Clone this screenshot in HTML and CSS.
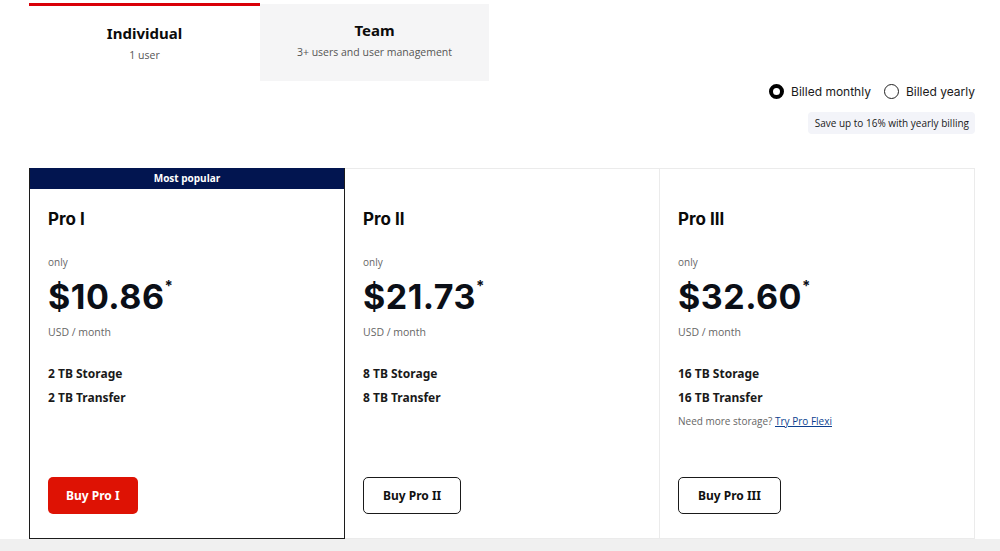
FILE: index.html
```html
<!DOCTYPE html>
<html lang="en">
<head>
<meta charset="utf-8">
<title>Plans</title>
<link rel="stylesheet" href="styles.css">
</head>
<body>
<main class="page">
  <div class="tabs">
    <div class="tab tab-active">
      <div class="tab-title">Individual</div>
      <div class="tab-sub">1 user</div>
    </div>
    <div class="tab tab-idle">
      <div class="tab-title">Team</div>
      <div class="tab-sub">3+ users and user management</div>
    </div>
  </div>

  <div class="billing">
    <div class="radios">
      <label class="radio"><span class="dot dot-on"></span>Billed monthly</label>
      <label class="radio"><span class="dot"></span>Billed yearly</label>
    </div>
    <div class="save">Save up to 16% with yearly billing</div>
  </div>

  <div class="cards">
    <section class="card card-featured">
      <div class="badge">Most popular</div>
      <div class="card-body">
        <h2 class="plan">Pro I</h2>
        <div class="only">only</div>
        <div class="price">$10.86<sup>*</sup></div>
        <div class="unit">USD / month</div>
        <div class="feat">2 TB Storage</div>
        <div class="feat">2 TB Transfer</div>
        <div class="grow"></div>
        <div><button class="btn btn-red">Buy Pro I</button></div>
      </div>
    </section>
    <section class="card">
      <div class="badge badge-empty"></div>
      <div class="card-body">
        <h2 class="plan">Pro II</h2>
        <div class="only">only</div>
        <div class="price">$21.73<sup>*</sup></div>
        <div class="unit">USD / month</div>
        <div class="feat">8 TB Storage</div>
        <div class="feat">8 TB Transfer</div>
        <div class="grow"></div>
        <div><button class="btn btn-outline">Buy Pro II</button></div>
      </div>
    </section>
    <section class="card">
      <div class="badge badge-empty"></div>
      <div class="card-body">
        <h2 class="plan">Pro III</h2>
        <div class="only">only</div>
        <div class="price">$32.60<sup>*</sup></div>
        <div class="unit">USD / month</div>
        <div class="feat">16 TB Storage</div>
        <div class="feat">16 TB Transfer</div>
        <div class="more">Need more storage? <a href="#" class="link">Try Pro Flexi</a></div>
        <div class="grow"></div>
        <div><button class="btn btn-outline">Buy Pro III</button></div>
      </div>
    </section>
  </div>
  <div class="footer-band"></div>
</main>
</body>
</html>
```

FILE: styles.css
```css
* { box-sizing: border-box; }
html, body { margin: 0; padding: 0; background: #fff; }
body {
  font-family: "Open Sans", "Noto Sans", "Liberation Sans", sans-serif;
  color: #111;
  width: 1000px;
  height: 551px;
  overflow: hidden;
}
.page {
  display: flex;
  flex-direction: column;
  padding-top: 3px;
}
.tabs {
  display: flex;
  margin-left: 29px;
  height: 78px;
}
.tab {
  display: flex;
  flex-direction: column;
  align-items: center;
  padding-top: 17px;
}
.tab-active {
  width: 231px;
  border-top: 3px solid #d90007;
  background: #fff;
}
.tab-idle {
  width: 229px;
  background: #f5f5f6;
  margin-top: 1px;
  padding-top: 16px;
}
.tab-title {
  font-family: "Noto Sans", "Open Sans", sans-serif;
  font-weight: 700;
  font-size: 15px;
  line-height: 20px;
  color: #0b0b0b;
}
.tab-sub {
  font-size: 10.5px;
  line-height: 14px;
  color: #555;
  margin-top: 5px;
}
.billing {
  display: flex;
  flex-direction: column;
  align-items: flex-end;
  margin-right: 25px;
  margin-top: 1px;
}
.radios {
  display: flex;
  gap: 13px;
  height: 18px;
  align-items: center;
}
.radio {
  display: flex;
  align-items: center;
  gap: 7px;
  font-family: "Inter", "Noto Sans", sans-serif;
  font-size: 12px;
  color: #1a1a1a;
}
.dot {
  width: 15px;
  height: 15px;
  border-radius: 50%;
  border: 1px solid #222;
  background: #fff;
}
.dot-on {
  border: 4px solid #000;
}
.save {
  margin-top: 12px;
  background: #f3f4f9;
  border-radius: 4px;
  font-size: 10px;
  line-height: 22px;
  padding: 0 6px 0 7px;
  color: #1a1a1a;
}
.cards {
  display: grid;
  grid-template-columns: 316px 315px 315px;
  margin-left: 29px;
  margin-top: 34px;
  height: 371px;
}
.card {
  display: flex;
  flex-direction: column;
  border: 1px solid #ebebeb;
  border-left: none;
}
.card-featured {
  border: 1px solid #1c1c1c;
  border-top: none;
}
.badge {
  height: 21px;
  background: #021550;
  color: #fff;
  font-family: "Open Sans", sans-serif;
  font-weight: 700;
  font-size: 10px;
  line-height: 21px;
  text-align: center;
}
.badge-empty {
  background: transparent;
  height: 20px;
}
.card-body {
  flex: 1;
  display: flex;
  flex-direction: column;
  padding: 18px 18px 24px 18px;
}
.plan {
  margin: 0;
  font-family: "Inter", "Noto Sans", sans-serif;
  font-weight: 700;
  font-size: 17px;
  line-height: 24px;
  color: #0a0a0a;
}
.only {
  margin-top: 24px;
  font-size: 10px;
  line-height: 14px;
  color: #666;
}
.price {
  margin-top: 8px;
  font-family: "Inter", "Noto Sans", sans-serif;
  font-weight: 700;
  font-size: 34px;
  line-height: 40px;
  color: #0b0f17;
  letter-spacing: 0.5px;
}
.price sup {
  font-size: 15px;
  vertical-align: top;
  line-height: 20px;
  margin-left: 0;
  position: relative;
  top: -1px;
}
.unit {
  margin-top: 8px;
  font-size: 10.5px;
  line-height: 14px;
  color: #666;
}
.feat {
  font-family: "Noto Sans", "Open Sans", sans-serif;
  font-weight: 700;
  font-size: 12px;
  line-height: 24px;
  color: #1a1a1a;
}
.unit + .feat { margin-top: 23px; }
.more {
  font-size: 10px;
  line-height: 22px;
  color: #666;
}
.link {
  color: #0c3f8f;
  text-decoration: underline;
}
.grow { flex: 1; }
.btn {
  font-family: "Noto Sans", "Open Sans", sans-serif;
  font-weight: 700;
  font-size: 12px;
  height: 37px;
  border-radius: 5px;
  cursor: pointer;
}
.btn-red {
  background: #de1204;
  color: #fff;
  border: none;
  padding: 0 18px;
}
.btn-outline {
  background: #fff;
  color: #111;
  border: 1.5px solid #1a1a1a;
  padding: 0 19px;
}
.footer-band {
  height: 12px;
  background: #f0f0f0;
}
```
